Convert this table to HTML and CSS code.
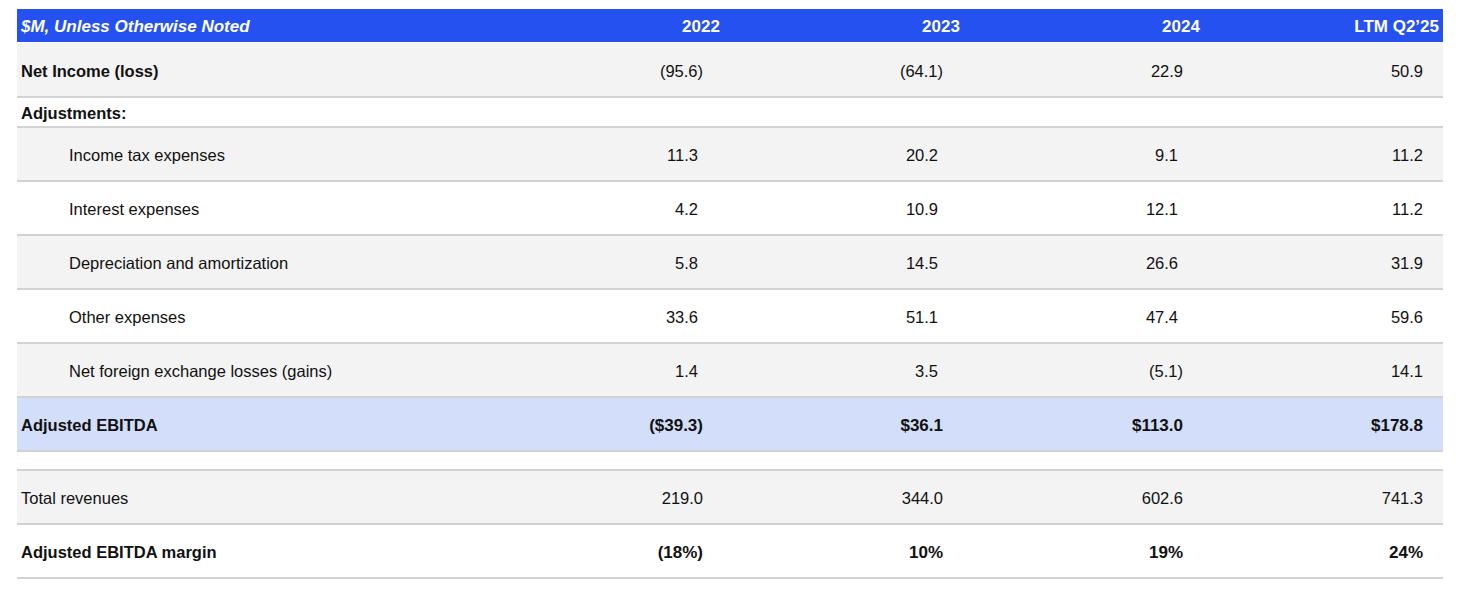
FILE: index.html
```html
<!DOCTYPE html>
<html>
<head>
<meta charset="utf-8">
<link rel="stylesheet" href="styles.css">
</head>
<body>
<div class="table">
  <div class="row head">
    <div class="lbl">$M, Unless Otherwise Noted</div>
    <div class="hc">2022</div>
    <div class="hc">2023</div>
    <div class="hc">2024</div>
    <div class="hc last">LTM Q2’25</div>
  </div>
  <div class="row grey tall">
    <div class="lbl b">Net Income (loss)</div>
    <div class="num">(95.6)</div>
    <div class="num">(64.1)</div>
    <div class="num">22.9</div>
    <div class="num last">50.9</div>
  </div>
  <div class="row short bold">
    <div class="lbl">Adjustments:</div>
    <div></div><div></div><div></div><div></div>
  </div>
  <div class="row grey">
    <div class="lbl ind">Income tax expenses</div>
    <div class="num sp">11.3</div>
    <div class="num sp">20.2</div>
    <div class="num sp">9.1</div>
    <div class="num last">11.2</div>
  </div>
  <div class="row">
    <div class="lbl ind">Interest expenses</div>
    <div class="num sp">4.2</div>
    <div class="num sp">10.9</div>
    <div class="num sp">12.1</div>
    <div class="num last">11.2</div>
  </div>
  <div class="row grey">
    <div class="lbl ind">Depreciation and amortization</div>
    <div class="num sp">5.8</div>
    <div class="num sp">14.5</div>
    <div class="num sp">26.6</div>
    <div class="num last">31.9</div>
  </div>
  <div class="row">
    <div class="lbl ind">Other expenses</div>
    <div class="num sp">33.6</div>
    <div class="num sp">51.1</div>
    <div class="num sp">47.4</div>
    <div class="num last">59.6</div>
  </div>
  <div class="row grey">
    <div class="lbl ind">Net foreign exchange losses (gains)</div>
    <div class="num sp">1.4</div>
    <div class="num sp">3.5</div>
    <div class="num">(5.1)</div>
    <div class="num last">14.1</div>
  </div>
  <div class="row blue bold">
    <div class="lbl">Adjusted EBITDA</div>
    <div class="num">($39.3)</div>
    <div class="num">$36.1</div>
    <div class="num">$113.0</div>
    <div class="num last">$178.8</div>
  </div>
  <div class="row spacer"></div>
  <div class="row grey">
    <div class="lbl">Total revenues</div>
    <div class="num">219.0</div>
    <div class="num">344.0</div>
    <div class="num">602.6</div>
    <div class="num last">741.3</div>
  </div>
  <div class="row bold">
    <div class="lbl">Adjusted EBITDA margin</div>
    <div class="num">(18%)</div>
    <div class="num">10%</div>
    <div class="num">19%</div>
    <div class="num last">24%</div>
  </div>
</div>
</body>
</html>
```
FILE: styles.css
```css
* { box-sizing: border-box; }
html, body { margin: 0; padding: 0; background: #ffffff; }
body {
  padding: 9px 30px 0 17px;
  font-family: "Liberation Sans", Arial, sans-serif;
  color: #111111;
}
.table {
  width: 1426px;
  display: flex;
  flex-direction: column;
}
.row {
  display: grid;
  grid-template-columns: 564px 240px 240px 240px 142px;
  align-items: center;
  height: 54px;
  border-bottom: 2px solid #d2d2d2;
  font-size: 16.5px;
}
.row.grey { background: #f3f3f3; }
.row.blue { background: #d3defa; }
.row.tall { height: 55px; }
.row.short { height: 30px; }
.row.spacer { height: 19px; }
.row.bold { font-weight: bold; }
.row.head {
  height: 34px;
  background: #2451f0;
  border-bottom: 1px solid #ffffff;
  color: #ffffff;
  font-weight: bold;
  font-size: 17px;
  padding-top: 2px;
}
.head .lbl { font-style: italic; padding-top: 0; }
.lbl {
  padding-left: 4px;
  padding-top: 3px;
  white-space: nowrap;
}
.lbl.b { font-weight: bold; }
.lbl.ind { padding-left: 52px; padding-top: 2px; }
.hc { text-align: center; }
.hc.last { text-align: right; padding-right: 4px; }
.num {
  text-align: right;
  padding-right: 118px;
  padding-top: 3px;
  white-space: nowrap;
}
.num.sp { padding-right: 123px; }
.num.last { padding-right: 20px; }
.bold .num { font-size: 17px; }
```
